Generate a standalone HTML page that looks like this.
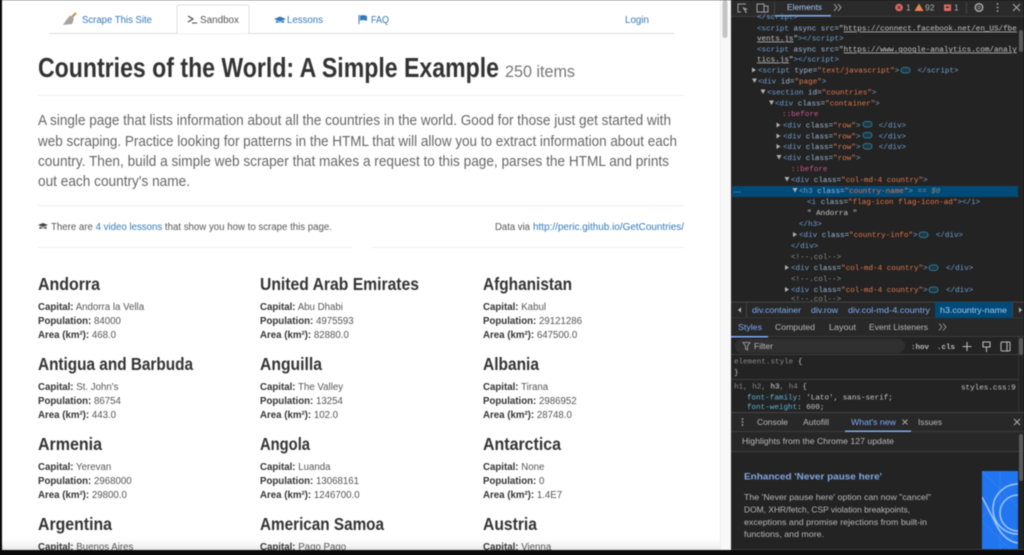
<!DOCTYPE html>
<html><head><meta charset="utf-8"><title>Countries of the World</title>
<style>
html,body{margin:0;padding:0;background:#0a0a0a;width:1024px;height:555px;overflow:hidden}
svg{display:block;filter:blur(.45px)}
svg svg{filter:none}
text{font-family:"Liberation Sans",sans-serif;white-space:pre}
.m text,text.m{font-family:"Liberation Mono",monospace;font-size:7.6px}
.t{fill:#6f9fd0}.a{fill:#9db9d8}.v{fill:#e0774a}.p{fill:#c9578c}.g{fill:#8a8a8a}.w{fill:#c8c8c8}
.h{font-size:17.5px;font-weight:bold;fill:#333}
.i{font-size:9.7px;fill:#555}
.i tspan{font-weight:bold;fill:#333}
.l{font-size:10px;fill:#337ab7}
.d{font-size:8.5px;fill:#b8b8b8}
.b{font-size:8.5px;fill:#7cacf8}
.lead{font-size:14.3px;fill:#666}
</style></head><body>
<svg width="1024" height="555" viewBox="0 0 1024 555" xmlns="http://www.w3.org/2000/svg">
<defs><linearGradient id="fade" x1="0" y1="0" x2="0" y2="1"><stop offset="0" stop-color="#fff" stop-opacity="0"/><stop offset="1" stop-color="#e8e8e8"/></linearGradient></defs>
<rect width="1024" height="555" fill="#0a0a0a"/>
<path d="M2 0H731V550H8Q2 550 2 544Z" fill="#fff"/>
<rect x="2" y="535" width="718" height="15" fill="url(#fade)"/>
<rect x="720" y="0" width="11" height="550" fill="#f8f8f8"/>
<rect x="720" y="0" width="1" height="550" fill="#ececec"/>
<rect x="722.500" y="0" width="5" height="38" rx="2.500" fill="#c4c4c4"/>

<!-- nav -->
<rect x="49" y="33" width="625" height="1" fill="#ddd"/>
<path d="M177 33.500V7Q177 5 179 5H247Q249 5 249 7V33.500" fill="#fff" stroke="#ddd"/>
<path d="M66 20.500L70 15.500L74 18.500L72 24L63 25Z" fill="#a3a3a3"/><path d="M72 17L76 13" stroke="#c98a45" stroke-width="2"/>
<text class="l" x="82" y="23" textLength="70" lengthAdjust="spacingAndGlyphs">Scrape This Site</text>
<path d="M188 16L193 19L188 22M192 23H197" fill="none" stroke="#444" stroke-width="1.100"/>
<text x="200" y="23" font-size="10" fill="#555" textLength="39" lengthAdjust="spacingAndGlyphs">Sandbox</text>
<path d="M274 19L280 16.500L286 19L280 21.500Z M276 20.500V23Q280 21.500 284 23V20.500L280 22Z" fill="#337ab7"/>
<text class="l" x="287" y="23" textLength="36" lengthAdjust="spacingAndGlyphs">Lessons</text>
<path d="M359 15V24" stroke="#337ab7"/><path d="M360 15.500Q364 14.500 367 16V21Q364 19.500 360 20.500Z" fill="#337ab7"/>
<text class="l" x="371" y="23" textLength="18" lengthAdjust="spacingAndGlyphs">FAQ</text>
<text class="l" x="625" y="23" textLength="24" lengthAdjust="spacingAndGlyphs">Login</text>

<!-- heading -->
<text x="38" y="77" font-size="28" font-weight="bold" fill="#333" textLength="461" lengthAdjust="spacingAndGlyphs">Countries of the World: A Simple Example</text>
<text x="505" y="77" font-size="16.500" fill="#777" textLength="70" lengthAdjust="spacingAndGlyphs">250 items</text>
<rect x="38" y="95" width="646" height="1" fill="#eee"/>
<text class="lead" x="38" y="125" textLength="633" lengthAdjust="spacingAndGlyphs">A single page that lists information about all the countries in the world. Good for those just get started with</text>
<text class="lead" x="38" y="146" textLength="639" lengthAdjust="spacingAndGlyphs">web scraping. Practice looking for patterns in the HTML that will allow you to extract information about each</text>
<text class="lead" x="38" y="166" textLength="631" lengthAdjust="spacingAndGlyphs">country. Then, build a simple web scraper that makes a request to this page, parses the HTML and prints</text>
<text class="lead" x="38" y="186" textLength="152" lengthAdjust="spacingAndGlyphs">out each country's name.</text>
<rect x="38" y="205" width="646" height="1" fill="#eee"/>
<path d="M38 225L43 223L48 225L43 227Z M39.500 226.500V229Q43 227.500 46.500 229V226.500L43 228Z" fill="#444"/>
<text class="i" x="51" y="230" textLength="281" lengthAdjust="spacingAndGlyphs">There are <tspan style="font-weight:normal;fill:#337ab7">4 video lessons</tspan> that show you how to scrape this page.</text>
<text class="i" x="495" y="230" textLength="35" lengthAdjust="spacingAndGlyphs">Data via</text>
<text class="l" x="533" y="230" textLength="151" lengthAdjust="spacingAndGlyphs">http://peric.github.io/GetCountries/</text>
<rect x="38" y="247" width="314" height="1" fill="#eee"/><rect x="372" y="247" width="312" height="1" fill="#eee"/>

<!-- countries -->
<text class="h" x="38" y="290" textLength="62" lengthAdjust="spacingAndGlyphs">Andorra</text>
<text class="i" x="38" y="310"><tspan>Capital:</tspan> Andorra la Vella</text>
<text class="i" x="38" y="324"><tspan>Population:</tspan> 84000</text>
<text class="i" x="38" y="338"><tspan>Area (km²):</tspan> 468.0</text>
<text class="h" x="260" y="290" textLength="159" lengthAdjust="spacingAndGlyphs">United Arab Emirates</text>
<text class="i" x="260" y="310"><tspan>Capital:</tspan> Abu Dhabi</text>
<text class="i" x="260" y="324"><tspan>Population:</tspan> 4975593</text>
<text class="i" x="260" y="338"><tspan>Area (km²):</tspan> 82880.0</text>
<text class="h" x="483" y="290" textLength="89" lengthAdjust="spacingAndGlyphs">Afghanistan</text>
<text class="i" x="483" y="310"><tspan>Capital:</tspan> Kabul</text>
<text class="i" x="483" y="324"><tspan>Population:</tspan> 29121286</text>
<text class="i" x="483" y="338"><tspan>Area (km²):</tspan> 647500.0</text>

<text class="h" x="38" y="370" textLength="155" lengthAdjust="spacingAndGlyphs">Antigua and Barbuda</text>
<text class="i" x="38" y="390"><tspan>Capital:</tspan> St. John's</text>
<text class="i" x="38" y="404"><tspan>Population:</tspan> 86754</text>
<text class="i" x="38" y="418"><tspan>Area (km²):</tspan> 443.0</text>
<text class="h" x="260" y="370" textLength="62" lengthAdjust="spacingAndGlyphs">Anguilla</text>
<text class="i" x="260" y="390"><tspan>Capital:</tspan> The Valley</text>
<text class="i" x="260" y="404"><tspan>Population:</tspan> 13254</text>
<text class="i" x="260" y="418"><tspan>Area (km²):</tspan> 102.0</text>
<text class="h" x="483" y="370" textLength="56" lengthAdjust="spacingAndGlyphs">Albania</text>
<text class="i" x="483" y="390"><tspan>Capital:</tspan> Tirana</text>
<text class="i" x="483" y="404"><tspan>Population:</tspan> 2986952</text>
<text class="i" x="483" y="418"><tspan>Area (km²):</tspan> 28748.0</text>

<text class="h" x="38" y="450" textLength="64" lengthAdjust="spacingAndGlyphs">Armenia</text>
<text class="i" x="38" y="470"><tspan>Capital:</tspan> Yerevan</text>
<text class="i" x="38" y="484"><tspan>Population:</tspan> 2968000</text>
<text class="i" x="38" y="498"><tspan>Area (km²):</tspan> 29800.0</text>
<text class="h" x="260" y="450" textLength="50" lengthAdjust="spacingAndGlyphs">Angola</text>
<text class="i" x="260" y="470"><tspan>Capital:</tspan> Luanda</text>
<text class="i" x="260" y="484"><tspan>Population:</tspan> 13068161</text>
<text class="i" x="260" y="498"><tspan>Area (km²):</tspan> 1246700.0</text>
<text class="h" x="483" y="450" textLength="78" lengthAdjust="spacingAndGlyphs">Antarctica</text>
<text class="i" x="483" y="470"><tspan>Capital:</tspan> None</text>
<text class="i" x="483" y="484"><tspan>Population:</tspan> 0</text>
<text class="i" x="483" y="498"><tspan>Area (km²):</tspan> 1.4E7</text>

<text class="h" x="38" y="530" textLength="74" lengthAdjust="spacingAndGlyphs">Argentina</text>
<text class="i" x="38" y="550"><tspan>Capital:</tspan> Buenos Aires</text>
<text class="h" x="260" y="530" textLength="124" lengthAdjust="spacingAndGlyphs">American Samoa</text>
<text class="i" x="260" y="550"><tspan>Capital:</tspan> Pago Pago</text>
<text class="h" x="483" y="530" textLength="54" lengthAdjust="spacingAndGlyphs">Austria</text>
<text class="i" x="483" y="550"><tspan>Capital:</tspan> Vienna</text>
<rect x="0" y="550" width="731" height="5" fill="#0a0a0a"/>

<!-- devtools -->
<rect x="731" y="0" width="293" height="550" fill="#232323"/>
<rect x="731" y="0" width="293" height="16" fill="#2a2a2a"/>
<rect x="731" y="16" width="293" height="1" fill="#3c3c3c"/>
<path d="M746 4H738V12H741" fill="none" stroke="#a0a0a0"/><path d="M742 7L748 9L745.500 10L747 12.500L745.500 13L744.500 10.500Z" fill="#a0a0a0"/>
<rect x="757" y="4" width="7" height="8" fill="none" stroke="#a0a0a0"/><rect x="764" y="6" width="4" height="6" fill="none" stroke="#a0a0a0"/>
<rect x="774" y="2" width="1" height="12" fill="#444"/>
<text class="b" x="787" y="10" textLength="35" lengthAdjust="spacingAndGlyphs" style="fill:#a8c7fa">Elements</text>
<rect x="775" y="15" width="56" height="1.500" fill="#7cacf8"/>
<path d="M834 4L837 7.500L834 11M838 4L841 7.500L838 11" fill="none" stroke="#999"/>
<circle cx="899" cy="7.500" r="3.800" fill="#e46962"/><path d="M897.500 6L900.500 9M900.500 6L897.500 9" stroke="#2a2a2a" stroke-width=".8"/>
<text x="906" y="10.500" font-size="8.500" fill="#b0b0b0">1</text>
<path d="M919 3.500L923.500 11H914.500Z" fill="#e8854a"/>
<text x="925" y="10.500" font-size="8.500" fill="#b0b0b0">92</text>
<rect x="944" y="4.500" width="7" height="6.500" fill="#e46962"/><rect x="946" y="6.500" width="3" height="1.500" fill="#2a2a2a"/>
<text x="954" y="10.500" font-size="8.500" fill="#b0b0b0">1</text>
<rect x="966" y="2" width="1" height="12" fill="#444"/>
<circle cx="979" cy="7.500" r="3.800" fill="none" stroke="#aaa" stroke-width="1.500"/><circle cx="979" cy="7.500" r="1.300" fill="none" stroke="#aaa" stroke-width=".7"/>
<circle cx="997.500" cy="4" r=".9" fill="#aaa"/><circle cx="997.500" cy="7.500" r=".9" fill="#aaa"/><circle cx="997.500" cy="11" r=".9" fill="#aaa"/>
<path d="M1013 4L1020 11M1020 4L1013 11" stroke="#aaa"/>

<rect x="732" y="186" width="286" height="11" fill="#004a77"/>
<rect x="1019" y="30" width="4" height="22" rx="2" fill="#5a5a5a"/>
<g class="m">
<text x="757" y="19" class="t">&lt;/script&gt;</text>
<text x="757" y="30.500"><tspan class="t">&lt;script</tspan> <tspan class="a">async src=</tspan><tspan class="w">"</tspan><tspan class="w" text-decoration="underline">https://connect.facebook.net/en_US/fbe</tspan></text>
<text x="757" y="40.500"><tspan class="w" text-decoration="underline">vents.js</tspan><tspan class="w">"</tspan><tspan class="t">&gt;&lt;/script&gt;</tspan></text>
<text x="757" y="51.500"><tspan class="t">&lt;script</tspan> <tspan class="a">async src=</tspan><tspan class="w">"</tspan><tspan class="w" text-decoration="underline">https://www.google-analytics.com/analy</tspan></text>
<text x="757" y="61.500"><tspan class="w" text-decoration="underline">tics.js</tspan><tspan class="w">"</tspan><tspan class="t">&gt;&lt;/script&gt;</tspan></text>
<text x="758" y="72.500"><tspan class="t">&lt;script</tspan> <tspan class="a">type=</tspan><tspan class="v">"text/javascript"</tspan><tspan class="t">&gt;</tspan>    <tspan class="t">&lt;/script&gt;</tspan></text>
<text x="758" y="83.500"><tspan class="t">&lt;div</tspan> <tspan class="a">id=</tspan><tspan class="v">"page"</tspan><tspan class="t">&gt;</tspan></text>
<text x="767" y="94.500"><tspan class="t">&lt;section</tspan> <tspan class="a">id=</tspan><tspan class="v">"countries"</tspan><tspan class="t">&gt;</tspan></text>
<text x="775" y="105.500"><tspan class="t">&lt;div</tspan> <tspan class="a">class=</tspan><tspan class="v">"container"</tspan><tspan class="t">&gt;</tspan></text>
<text x="782" y="116" class="p">::before</text>
<text x="783" y="127.500"><tspan class="t">&lt;div</tspan> <tspan class="a">class=</tspan><tspan class="v">"row"</tspan><tspan class="t">&gt;</tspan>    <tspan class="t">&lt;/div&gt;</tspan></text>
<text x="783" y="138.500"><tspan class="t">&lt;div</tspan> <tspan class="a">class=</tspan><tspan class="v">"row"</tspan><tspan class="t">&gt;</tspan>    <tspan class="t">&lt;/div&gt;</tspan></text>
<text x="783" y="149"><tspan class="t">&lt;div</tspan> <tspan class="a">class=</tspan><tspan class="v">"row"</tspan><tspan class="t">&gt;</tspan>    <tspan class="t">&lt;/div&gt;</tspan></text>
<text x="783" y="160"><tspan class="t">&lt;div</tspan> <tspan class="a">class=</tspan><tspan class="v">"row"</tspan><tspan class="t">&gt;</tspan></text>
<text x="791" y="171" class="p">::before</text>
<text x="791" y="182"><tspan class="t">&lt;div</tspan> <tspan class="a">class=</tspan><tspan class="v">"col-md-4 country"</tspan><tspan class="t">&gt;</tspan></text>
<text x="799" y="193"><tspan class="t">&lt;h3</tspan> <tspan class="a">class=</tspan><tspan class="v">"country-name"</tspan><tspan class="t">&gt;</tspan> <tspan class="g">==</tspan> <tspan class="g" font-style="italic">$0</tspan></text>
<text x="807" y="204"><tspan class="t">&lt;i</tspan> <tspan class="a">class=</tspan><tspan class="v">"flag-icon flag-icon-ad"</tspan><tspan class="t">&gt;&lt;/i&gt;</tspan></text>
<text x="807" y="215" class="w">" Andorra "</text>
<text x="799" y="226" class="t">&lt;/h3&gt;</text>
<text x="799" y="237"><tspan class="t">&lt;div</tspan> <tspan class="a">class=</tspan><tspan class="v">"country-info"</tspan><tspan class="t">&gt;</tspan>    <tspan class="t">&lt;/div&gt;</tspan></text>
<text x="791" y="248" class="t">&lt;/div&gt;</text>
<text x="791" y="259" class="g">&lt;!--.col--&gt;</text>
<text x="791" y="270"><tspan class="t">&lt;div</tspan> <tspan class="a">class=</tspan><tspan class="v">"col-md-4 country"</tspan><tspan class="t">&gt;</tspan>    <tspan class="t">&lt;/div&gt;</tspan></text>
<text x="791" y="281" class="g">&lt;!--.col--&gt;</text>
<text x="791" y="292"><tspan class="t">&lt;div</tspan> <tspan class="a">class=</tspan><tspan class="v">"col-md-4 country"</tspan><tspan class="t">&gt;</tspan>    <tspan class="t">&lt;/div&gt;</tspan></text>
<text x="791" y="301" class="g">&lt;!--.col--&gt;</text>
</g>
<!-- triangles -->
<path d="M752 67.500L756 70L752 72.500Z M752 78.500H757L754.500 83Z M760.500 89.500H765.500L763 94Z M769 100.500H774L771.500 105Z M776.500 122.500L780.500 125L776.500 127.500Z M776.500 133.500L780.500 136L776.500 138.500Z M776.500 144L780.500 146.500L776.500 149Z M776.500 155H781.500L779 159.500Z M784.500 177H789.500L787 181.500Z M792.500 188H797.500L795 192.500Z M793 232L797 234.500L793 237Z M785 265L789 267.500L785 270Z M785 287L789 289.500L785 292Z" fill="#b0b0b0"/>
<g fill="#1d3a46" stroke="#3a8ba8" stroke-width=".7">
<rect x="901" y="67.500" width="9" height="5.500" rx="2.700"/><rect x="863" y="121.500" width="9" height="5.500" rx="2.700"/><rect x="863" y="132.500" width="9" height="5.500" rx="2.700"/><rect x="863" y="143.500" width="9" height="5.500" rx="2.700"/><rect x="919" y="232" width="9" height="5.500" rx="2.700"/><rect x="929" y="265" width="9" height="5.500" rx="2.700"/><rect x="929" y="287" width="9" height="5.500" rx="2.700"/>
</g>
<text x="733" y="192.500" font-size="8" fill="#c8d6e0">…</text>

<!-- breadcrumb -->
<rect x="731" y="302" width="293" height="16" fill="#282828"/>
<rect x="731" y="301.500" width="293" height="1" fill="#444"/>
<rect x="731" y="317.500" width="293" height="1" fill="#3c3c3c"/>
<rect x="746" y="302" width="1" height="16" fill="#444"/>
<rect x="1012" y="302" width="1" height="16" fill="#444"/>
<path d="M741 307.500V312.500L738 310Z M1019 307.500V312.500L1022 310Z" fill="#bbb"/>
<rect x="935" y="302" width="77" height="16" fill="#004a77"/>
<text class="b" x="752" y="313" textLength="49" lengthAdjust="spacingAndGlyphs">div.container</text>
<text class="b" x="811" y="313" textLength="27" lengthAdjust="spacingAndGlyphs">div.row</text>
<text class="b" x="848" y="313" textLength="82" lengthAdjust="spacingAndGlyphs">div.col-md-4.country</text>
<text class="b" x="940" y="313" textLength="67" lengthAdjust="spacingAndGlyphs" style="fill:#a8c7fa">h3.country-name</text>

<!-- styles tabs -->
<rect x="731" y="318" width="293" height="19" fill="#282828"/>
<rect x="731" y="336" width="293" height="1" fill="#3c3c3c"/>
<rect x="731" y="336" width="37" height="1.500" fill="#7cacf8"/>
<text class="b" x="738" y="330" textLength="24" lengthAdjust="spacingAndGlyphs">Styles</text>
<text class="d" x="775" y="330" textLength="40" lengthAdjust="spacingAndGlyphs">Computed</text>
<text class="d" x="829" y="330" textLength="27" lengthAdjust="spacingAndGlyphs">Layout</text>
<text class="d" x="869" y="330" textLength="59" lengthAdjust="spacingAndGlyphs">Event Listeners</text>
<path d="M939 323.500L942 327L939 330.500M943 323.500L946 327L943 330.500" fill="none" stroke="#999" stroke-width=".9"/>
<rect x="735" y="339" width="170" height="14" rx="7" fill="#303030"/>
<path d="M743 342.500H750L747.500 346V350L745.500 349V346Z" fill="none" stroke="#aaa" stroke-width=".8"/>
<text class="d" x="754" y="349" textLength="19" lengthAdjust="spacingAndGlyphs">Filter</text>
<text x="911" y="349" font-size="7.500" font-weight="bold" style="font-family:'Liberation Mono',monospace" fill="#bbb">:hov</text>
<text x="937" y="349" font-size="7.500" font-weight="bold" style="font-family:'Liberation Mono',monospace" fill="#bbb">.cls</text>
<path d="M967 342V351M962.500 346.500H971.500" stroke="#bbb" stroke-width="1.100"/>
<path d="M983 342H990V347H983Z M986.500 347V352" fill="none" stroke="#bbb" stroke-width="1.100"/>
<rect x="1001" y="342" width="9" height="9" rx="1" fill="none" stroke="#bbb"/><path d="M1007 342V351" stroke="#bbb"/>
<rect x="1019" y="338" width="4" height="17" rx="2" fill="#5a5a5a"/>
<rect x="731" y="354" width="288" height="1" fill="#3c3c3c"/>
<rect x="731" y="379" width="288" height="1" fill="#3c3c3c"/>
<rect x="1018" y="337" width="1" height="76" fill="#333"/>
<g class="m">
<text x="734" y="363.500" class="g">element.style <tspan class="w">{</tspan></text>
<text x="734" y="374.500" class="w">}</text>
<text x="734" y="388.500" class="g">h1, h2, <tspan style="fill:#ddd">h3</tspan>, h4 <tspan class="w">{</tspan></text>
<text x="961" y="389.500" class="w">styles.css:9</text>
<text x="747" y="399.500"><tspan style="fill:#5db6d8">font-family</tspan><tspan class="w">: 'Lato', sans-serif;</tspan></text>
<text x="747" y="409"><tspan style="fill:#5db6d8">font-weight</tspan><tspan class="w">: 600;</tspan></text>
</g>

<!-- drawer -->
<rect x="731" y="412" width="293" height="20" fill="#282828"/>
<rect x="731" y="412" width="293" height="1" fill="#444"/>
<rect x="731" y="431" width="293" height="1" fill="#3c3c3c"/>
<circle cx="742.500" cy="419" r=".9" fill="#aaa"/><circle cx="742.500" cy="422" r=".9" fill="#aaa"/><circle cx="742.500" cy="425" r=".9" fill="#aaa"/>
<text class="d" x="757" y="425" textLength="31" lengthAdjust="spacingAndGlyphs">Console</text>
<text class="d" x="803" y="425" textLength="26" lengthAdjust="spacingAndGlyphs">Autofill</text>
<text class="b" x="851" y="425" textLength="45" lengthAdjust="spacingAndGlyphs">What's new</text>
<path d="M902.500 419.500L907.500 424.500M907.500 419.500L902.500 424.500" stroke="#aaa" stroke-width=".9"/>
<text class="d" x="918" y="425" textLength="24" lengthAdjust="spacingAndGlyphs">Issues</text>
<path d="M1014 419L1020 425M1020 419L1014 425" stroke="#aaa"/>
<rect x="845" y="430.500" width="66" height="1.500" fill="#7cacf8"/>
<rect x="731" y="432" width="293" height="19" fill="#272727"/>
<rect x="731" y="451" width="288" height="1" fill="#3c3c3c"/>
<text class="d" x="742" y="444" textLength="152" lengthAdjust="spacingAndGlyphs">Highlights from the Chrome 127 update</text>
<rect x="1019" y="434" width="4" height="47" rx="2" fill="#5a5a5a"/>
<text x="744" y="479.500" font-size="9.500" font-weight="bold" fill="#7fa8e4" textLength="138" lengthAdjust="spacingAndGlyphs">Enhanced 'Never pause here'</text>
<text class="d" x="744" y="500" textLength="187" lengthAdjust="spacingAndGlyphs">The 'Never pause here' option can now "cancel"</text>
<text class="d" x="744" y="512.500" textLength="166" lengthAdjust="spacingAndGlyphs">DOM, XHR/fetch, CSP violation breakpoints,</text>
<text class="d" x="744" y="525" textLength="183" lengthAdjust="spacingAndGlyphs">exceptions and promise rejections from built-in</text>
<text class="d" x="744" y="537" textLength="80" lengthAdjust="spacingAndGlyphs">functions, and more.</text>
<svg x="982" y="471" width="36" height="78" viewBox="0 0 36 78">
<rect width="36" height="78" fill="#2176f0"/>
<path d="M0 0L36 36M36 10L0 46M0 50L28 78M36 60L18 78M18 0V78" stroke="#4a8df2" stroke-width=".4" fill="none"/>
<path d="M0 26L14 53Q22 70 36 72M36 13A25 25 0 0 0 36 63M36 24A18 18 0 0 0 36 60" fill="none" stroke="#9cc4f8" stroke-width="1.500"/>
</svg>
<rect x="731" y="549" width="293" height="1" fill="#3a3a3a"/>
<rect x="731" y="550" width="293" height="5" fill="#0a0a0a"/>
</svg>
</body></html>
